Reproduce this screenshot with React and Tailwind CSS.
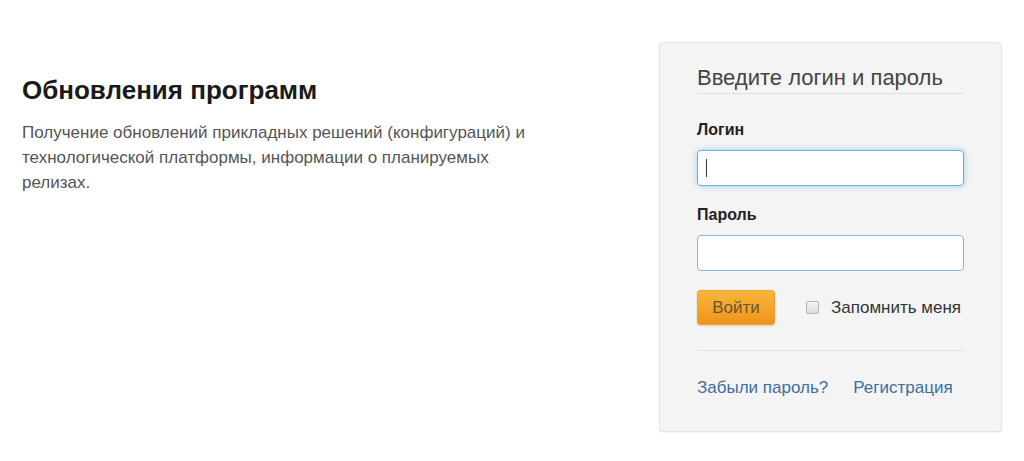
import React from 'react'

export default function App() {
  return (
    <div className="w-[1024px] h-[461px] bg-white flex font-['Liberation_Sans',Arial,sans-serif]">
      {/* Left column */}
      <div className="w-[659px] pl-[22px] pt-[76px]">
        <h1 className="text-[26px] leading-[28px] font-bold text-[#1a1a1a]">Обновления программ</h1>
        <p className="mt-[16px] w-[530px] text-[17px] leading-[25px] text-[#555]">
          Получение обновлений прикладных решений (конфигураций) и технологической платформы, информации о планируемых релизах.
        </p>
      </div>

      {/* Login panel */}
      <div className="mt-[42px] w-[343px] h-[390px] bg-[#f4f4f4] border border-[#e3e3e3] rounded-[4px] shadow-[0_1px_2px_rgba(0,0,0,0.06)] px-[37px] pt-[22px]">
        <div className="text-[22px] leading-[26px] text-[#444] pb-[2px] border-b border-[#e2e2e2]">
          Введите логин и пароль
        </div>

        <label className="block mt-[27px] text-[16px] leading-[18px] font-bold text-[#222]">Логин</label>
        <div className="mt-[11px] h-[36px] bg-white border border-[#66afe9] rounded-[4px] shadow-[0_0_6px_rgba(102,175,233,0.55)] flex items-center pl-[8px]">
          <span className="w-px h-[18px] bg-[#333]"></span>
        </div>

        <label className="block mt-[20px] text-[16px] leading-[18px] font-bold text-[#222]">Пароль</label>
        <div className="mt-[11px] h-[36px] bg-white border border-[#7db9e4] rounded-[4px]"></div>

        <div className="mt-[19px] flex items-center">
          <button className="w-[78px] h-[35px] rounded-[3px] bg-gradient-to-b from-[#f9b53c] to-[#ef9418] border border-[#e8a23a] text-[17px] text-[#6b5530] shadow-[0_1px_2px_rgba(0,0,0,0.15)]">
            Войти
          </button>
          <span className="ml-[31px] w-[13px] h-[13px] rounded-[2px] border border-[#b5b5b5] bg-gradient-to-b from-[#f4f4f4] to-[#dcdcdc]"></span>
          <span className="ml-[12px] text-[17px] text-[#333]">Запомнить меня</span>
        </div>

        <div className="mt-[25px] border-t border-[#e2e2e2]"></div>

        <div className="mt-[27px] flex gap-[25px] text-[17px] leading-[20px] text-[#3d6f9e]">
          <a href="#">Забыли пароль?</a>
          <a href="#">Регистрация</a>
        </div>
      </div>
    </div>
  )
}
